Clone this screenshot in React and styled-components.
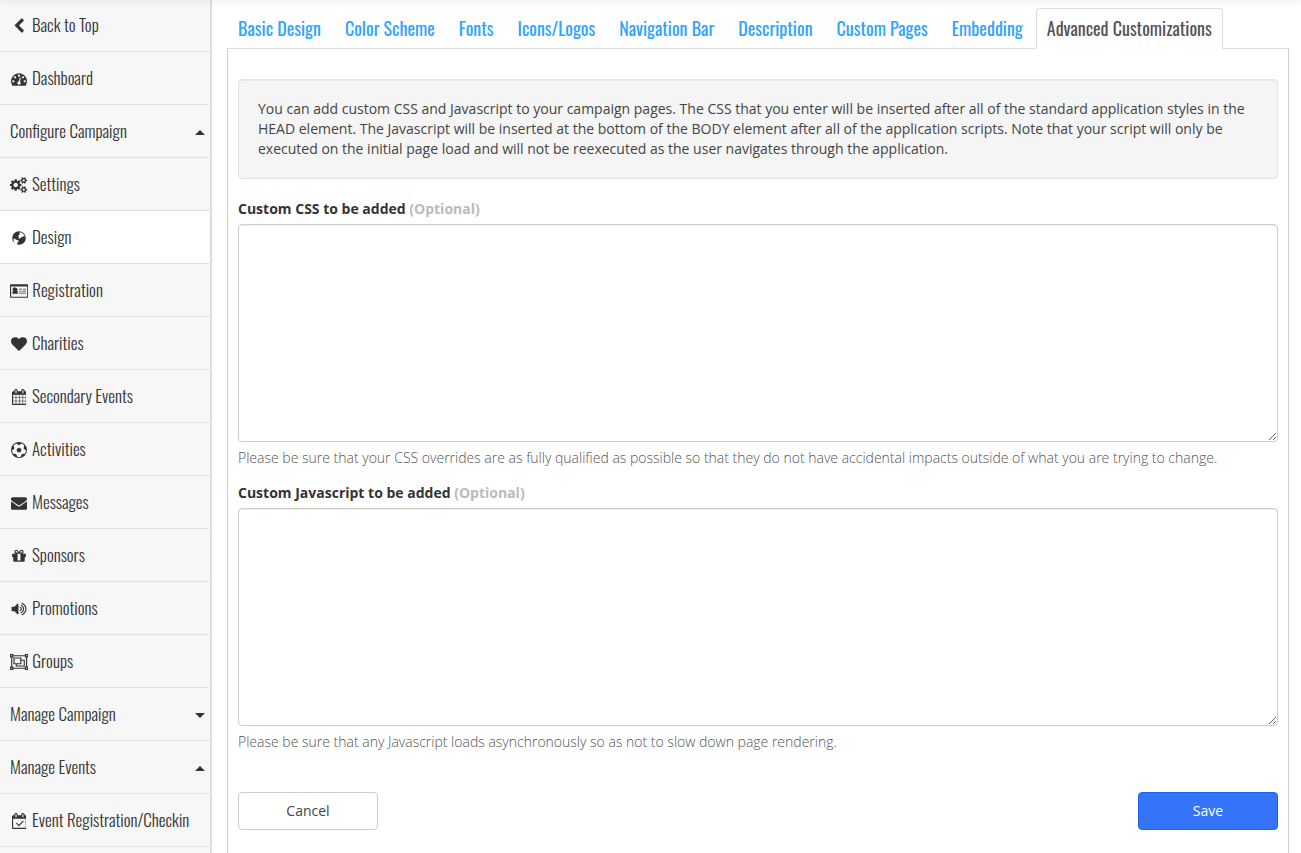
import React from "react";
import styled, { createGlobalStyle } from "styled-components";

const condensed = '"Oswald", "Liberation Sans Narrow", "Roboto Condensed", "Open Sans Condensed", "Liberation Sans", sans-serif';

const GlobalStyle = createGlobalStyle`
  *, *::before, *::after { box-sizing: border-box; }
  body {
    margin: 0;
    background: #fff;
    color: #333;
    font: 14px/20px "Open Sans", sans-serif;
  }
`;

const HeaderShadow = styled.div`
  position: fixed;
  top: 0;
  left: 0;
  right: 0;
  height: 0;
  z-index: 2;
  box-shadow: 0 0 6px 1px rgba(0, 0, 0, 0.15);
`;

const Page = styled.div`
  display: flex;
  min-height: 100vh;
`;

const Sidebar = styled.nav`
  flex: 0 0 212px;
  padding-right: 1px;
  background: #f7f7f7;
  border-right: 2px solid #dcdcdc;
`;

const MenuList = styled.ul`
  list-style: none;
  margin: -1px 0 0;
  padding: 0;
`;

const MenuItem = styled.a`
  display: flex;
  align-items: center;
  gap: 4px;
  height: 53px;
  padding: 0 4px 0 10px;
  border-bottom: 1px solid #dedede;
  background: ${(p) => (p.$active ? "#fff" : "transparent")};
  color: #333;
  font: 300 17px/24px ${condensed};
  text-decoration: none;
  white-space: nowrap;
`;

const IconBox = styled.span`
  display: flex;
  justify-content: center;
  flex: 0 0 18px;
  padding-top: 2px;

  svg {
    flex: none;
    height: 16px;
    fill: #333;
  }
`;

const Caret = styled.span`
  margin: 2px 0 0 auto;
  border: 5px solid transparent;
  border-top: ${(p) => (p.$up ? "0" : "5px solid #333")};
  border-bottom: ${(p) => (p.$up ? "5px solid #333" : "0")};
`;

const Main = styled.main`
  display: flex;
  flex-direction: column;
  flex: 1;
  min-width: 0;
  padding: 8px 12px 0 15px;
`;

const Tabs = styled.nav`
  display: flex;
  gap: 2px;
  border-bottom: 1px solid #ddd;
`;

const Tab = styled.a`
  height: 41px;
  margin-bottom: -1px;
  padding: 7px 10px;
  border: 1px solid ${(p) => (p.$active ? "#ddd" : "transparent")};
  border-bottom-color: ${(p) => (p.$active ? "#fff" : "transparent")};
  border-radius: 4px 4px 0 0;
  background: ${(p) => (p.$active ? "#fff" : "transparent")};
  color: ${(p) => (p.$active ? "#555" : "#2fa4ff")};
  font: 400 18px/24px ${condensed};
  text-decoration: none;
  white-space: nowrap;
`;

const Panel = styled.form`
  flex: 1;
  padding: 30px 10px 23px;
  border: solid #ccc;
  border-width: 0 1px;
`;

const Well = styled.p`
  margin: 0 0 20px;
  padding: 19px;
  border: 1px solid #e3e3e3;
  border-radius: 4px;
  background: #f5f5f5;
  box-shadow: inset 0 1px 1px rgba(0, 0, 0, 0.05);
  color: #444;
`;

const Field = styled.div`
  margin-bottom: 15px;
`;

const Label = styled.label`
  display: block;
  margin-bottom: 5px;
  font-weight: 700;
`;

const Optional = styled.span`
  color: #bbb;
`;

const CodeArea = styled.textarea`
  display: block;
  width: 100%;
  height: 218px;
  margin-bottom: 6px;
  padding: 6px 12px;
  border: 1px solid #ccc;
  border-radius: 4px;
  background: #fff;
  box-shadow: inset 0 1px 1px rgba(0, 0, 0, 0.075);
  color: #555;
  font: inherit;
  resize: vertical;
`;

const Help = styled.p`
  margin: 0;
  font-weight: 300;
  color: #555;
`;

const Actions = styled.div`
  display: flex;
  justify-content: space-between;
  padding-top: 25px;
`;

const Button = styled.button`
  width: 140px;
  height: 38px;
  border: 1px solid ${(p) => (p.$primary ? "#1a62f5" : "#ccc")};
  border-radius: 4px;
  background: ${(p) => (p.$primary ? "#3374f9" : "#fff")};
  color: ${(p) => (p.$primary ? "#fff" : "#444")};
  font: inherit;
  cursor: pointer;
`;

const cogTeeth =
  "v140q0 16-149 31-12 27-30 52 51 113 51 138 0 4-4 7-122 71-124 71-8 0-46-47t-52-68q-20 2-30 2t-30-2q-14 21-52 68t-46 47q-2 0-124-71-4-3-4-7 0-25 51-138-18-25-30-52-149-15-149-31v-140q0-16 149-31 13-29 30-52-51-113-51-138 0-4 4-7 4-2 35-20t59-34 30-16q8 0 46 46.5t52 67.500q20-2 30-2t30 2q51-71 92-112l6-2q4 0 124 70 4 3 4 7 0 25-51 138 17 23 30 52 149 15 149 31z";
const calendarFrame =
  "M1664 384v1280q0 52-38 90t-90 38h-1408q-52 0-90-38t-38-90v-1280q0-52 38-90t90-38h128v-96q0-66 47-113t113-47h64q66 0 113 47t47 113v96h384v-96q0-66 47-113t113-47h64q66 0 113 47t47 113v96h128q52 0 90 38t38 90z";
const calendarRings = "M384 128h128v352h-128z M1152 128h128v352h-128z";

const icons = {
  back: {
    w: 1792,
    d: "M1427 301l-531 531 531 531q19 19 19 45t-19 45l-166 166q-19 19-45 19t-45-19l-742-742q-19-19-19-45t19-45l742-742q19-19 45-19t45 19l166 166q19 19 19 45t-19 45z",
  },
  dashboard: {
    w: 1792,
    d: "M384 1152q0-53-37.500-90.500t-90.500-37.500-90.500 37.500-37.500 90.500 37.500 90.500 90.500 37.500 90.500-37.500 37.500-90.500zm192-448q0-53-37.500-90.500t-90.500-37.500-90.500 37.500-37.500 90.500 37.500 90.500 90.500 37.500 90.500-37.500 37.500-90.500zm428 481l101-382q6-26-7.500-48.500t-38.500-29.500-48 6.500-30 39.500l-101 382q-60 5-107 43.500t-63 98.500q-20 77 20 146t117 89 146-20 89-117q16-60-6-117t-72-91zm660-33q0-53-37.500-90.500t-90.500-37.500-90.500 37.500-37.500 90.500 37.500 90.500 90.500 37.500 90.500-37.500 37.500-90.500zm-640-640q0-53-37.500-90.500t-90.500-37.500-90.500 37.500-37.500 90.500 37.500 90.500 90.500 37.500 90.500-37.500 37.500-90.500zm448 192q0-53-37.500-90.500t-90.500-37.500-90.500 37.500-37.500 90.500 37.500 90.500 90.500 37.500 90.500-37.500 37.500-90.500zm320 448q0 261-141 483-19 29-54 29h-1402q-35 0-54-29-141-221-141-483 0-182 71-348t191-286 286-191 348-71 348 71 286 191 191 286 71 348z",
  },
  settings: {
    w: 1920,
    d: "M896 896q0-106-75-181t-181-75-181 75-75 181 75 181 181 75 181-75 75-181zm768 512q0-52-38-90t-90-38-90 38-38 90q0 53 37.500 90.500t90.500 37.500 90.500-37.500 37.500-90.500zm0-1024q0-52-38-90t-90-38-90 38-38 90q0 53 37.500 90.500t90.500 37.500 90.500-37.500 37.500-90.500zm-384 421v185q0 10-7 19.500t-16 10.500l-155 24q-11 35-32 76 34 48 90 115 7 11 7 20 0 12-7 19-23 30-82.500 89.500t-78.500 59.500q-11 0-21-7l-115-90q-37 19-77 31-11 108-23 155-7 24-30 24h-186q-11 0-20-7.500t-10-17.500l-23-153q-34-10-75-31l-118 89q-7 7-20 7-11 0-21-8-144-133-144-160 0-9 7-19 10-14 41-53t47-61q-23-44-35-82l-152-24q-10-1-17-9.500t-7-19.500v-185q0-10 7-19.500t16-10.500l155-24q11-35 32-76-34-48-90-115-7-11-7-20 0-12 7-20 22-30 82-89t79-59q11 0 21 7l115 90q34-18 77-32 11-108 23-154 7-24 30-24h186q11 0 20 7.500t10 17.500l23 153q34 10 75 31l118-89q8-7 20-7 11 0 21 8 144 133 144 160 0 8-7 19-12 16-42 54t-45 60q23 48 34 82l152 23q10 2 17 10.500t7 19.500z M1920 1338" + cogTeeth + "M1920 314" + cogTeeth,
  },
  design: {
    w: 1792,
    d: "M896 128a768 768 0 1 0 0 1536a768 768 0 1 0 0-1536z M960 270l180 10 220 130 130 190 30 150-130-40-120 60-140 30-80 110-150 50-80-70 100-110-110-90 60-120 130-70-60-110z M300 950l140 30 120 110 170 40 130 110-60 130-90 70-20 170-150-50-150-130-90-180-20-150z",
  },
  registration: {
    w: 2048,
    d: "M128 128h1792q128 0 128 128v1280q0 128-128 128h-1792q-128 0-128-128v-1280q0-128 128-128z M128 384v1152h1792v-1152z M640 544a190 190 0 0 1 150 310q106 80 106 266q0 96-96 96h-448q-96 0-96-96q0-186 106-266a190 190 0 0 1 278-310z M1024 640h352v96h-352z M1472 640h320v96h-320z M1024 864h256v96h-256z M1376 864h416v96h-416z M1024 1088h768v96h-768z",
  },
  charities: {
    w: 1792,
    d: "M896 1664q-26 0-44-18l-624-602q-10-8-27.500-26t-55.500-65.500-68-97.500-53.500-121-23.500-138q0-220 127-344t351-124q62 0 126.500 21.500t120 58 95.500 68.500 76 68q36-36 76-68t95.500-68.500 120-58 126.500-21.500q224 0 351 124t127 344q0 221-229 450l-623 600q-18 18-44 18z",
  },
  events: {
    w: 1664,
    d: calendarFrame + calendarRings + "M128 640h288v288h-288z M480 640h320v288h-320z M864 640h320v288h-320z M1248 640h288v288h-288z M128 992h288v320h-288z M480 992h320v320h-320z M864 992h320v320h-320z M1248 992h288v320h-288z M128 1376h288v288h-288z M480 1376h320v288h-320z M864 1376h320v288h-320z M1248 1376h288v288h-288z",
  },
  activities: {
    w: 1792,
    d: "M896 0a896 896 0 1 0 0 1792a896 896 0 1 0 0-1792z M604 173L896 356L1188 173A780 780 0 0 1 1493 395L1410 729L1674 950A780 780 0 0 1 1557 1309L1213 1333L1085 1653A780 780 0 0 1 707 1653L579 1333L235 1309A780 780 0 0 1 118 950L382 729L299 395A780 780 0 0 1 604 173z M896 608l287 208-109 336h-355l-110-336z",
  },
  messages: {
    w: 1792,
    d: "M1792 710v794q0 66-47 113t-113 47h-1472q-66 0-113-47t-47-113v-794q44 49 101 87 362 246 497 345 57 42 92.500 65.500t94.500 48 110 24.500h2q51 0 110-24.500t94.500-48 92.500-65.500q170-123 498-345 57-39 100-87zm0-294q0 79-49 151t-122 123q-376 261-468 325-10 7-42.500 30.500t-54 38-52 32.500-57.500 27-50 9h-2q-23 0-50-9t-57.500-27-52-32.500-54-38-42.500-30.500q-91-64-262-182.500t-205-142.500q-62-42-117-115.500t-55-136.500q0-78 41.500-130t118.500-52h1472q65 0 112.500 47t47.500 113z",
  },
  sponsors: {
    w: 1792,
    d: "M1056 1356v-716h-320v716q0 25 18 38.500t46 13.500h192q28 0 46-13.500t18-38.500zm-456-844h195l-126-161q-26-31-69-31-40 0-68 28t-28 68 28 68 68 28zm688-96q0-40-28-68t-68-28q-43 0-69 31l-125 161h194q40 0 68-28t28-68zm376 256v320q0 14-9 23t-23 9h-96v416q0 40-28 68t-68 28h-1088q-40 0-68-28t-28-68v-416h-96q-14 0-23-9t-9-23v-320q0-14 9-23t23-9h440q-93 0-158.500-65.500t-65.500-158.500 65.500-158.500 158.500-65.500q107 0 168 77l128 165 128-165q61-77 168-77 93 0 158.500 65.500t65.500 158.500-65.500 158.500-158.500 65.500h440q14 0 23 9t9 23z",
  },
  promotions: {
    w: 1792,
    d: "M832 352v1088q0 26-19 45t-45 19-45-19l-333-333h-262q-26 0-45-19t-19-45v-384q0-26 19-45t45-19h262l333-333q19-19 45-19t45 19 19 45zm384 544q0 76-42.500 141.500t-112.500 93.500q-10 5-25 5-26 0-45-18.500t-19-45.500q0-21 12-35.500t29-25 34-23 29-36 12-56.500-12-56.500-29-36-34-23-29-25-12-35.500q0-27 19-45.500t45-18.500q15 0 25 5 70 27 112.500 93t42.500 142zm256 0q0 153-85 282.500t-225 188.500q-13 5-25 5-27 0-46-19t-19-45q0-39 39-59 56-29 76-44 74-54 115.500-135.500t41.500-173.500-41.500-173.500-115.500-135.500q-20-15-76-44-39-20-39-59 0-26 19-45t45-19q13 0 26 5 140 59 225 188.500t85 282.500zm256 0q0 230-127 422.500t-338 283.500q-13 5-26 5-26 0-45-19t-19-45q0-36 39-59 7-4 22.500-10.500t22.500-10.500q46-25 82-51 123-91 192-227t69-289-69-289-192-227q-36-26-82-51-7-4-22.500-10.500t-22.500-10.500q-39-23-39-59 0-26 19-45t45-19q13 0 26 5 211 91 338 283.500t127 422.500z",
  },
  groups: {
    w: 2048,
    d: "M0 0h384v128h1280v-128h384v384h-128v1024h128v384h-384v-128h-1280v128h-384v-384h128v-1024h-128z M128 128v128h128v-128z M1792 128v128h128v-128z M128 1536v128h128v-128z M1792 1536v128h128v-128z M384 256v128h-128v1024h128v128h1280v-128h128v-1024h-128v-128z M384 384h896v256h384v768h-1024v-256h-256z M512 512v512h640v-512z M1280 768v384h-512v128h768v-512z",
  },
  checkin: {
    w: 1664,
    d: calendarFrame + calendarRings + "M128 640v1024h1408v-1024z M1303 964l-512 512q-10 9-23 9t-23-9l-288-288q-9-10-9-23t9-22l46-46q9-9 22-9t23 9l220 220 444-444q10-9 23-9t22 9l46 46q9 9 9 22t-9 23z",
  },
};

function Icon({ name }) {
  const { w, d } = icons[name];
  return (
    <IconBox>
      <svg viewBox={`0 0 ${w} 1792`} aria-hidden="true">
        <path fillRule="evenodd" d={d} />
      </svg>
    </IconBox>
  );
}

const menu = [
  { text: "Back to Top", icon: "back" },
  { text: "Dashboard", icon: "dashboard" },
  { text: "Configure Campaign", caret: "up" },
  { text: "Settings", icon: "settings" },
  { text: "Design", icon: "design", active: true },
  { text: "Registration", icon: "registration" },
  { text: "Charities", icon: "charities" },
  { text: "Secondary Events", icon: "events" },
  { text: "Activities", icon: "activities" },
  { text: "Messages", icon: "messages" },
  { text: "Sponsors", icon: "sponsors" },
  { text: "Promotions", icon: "promotions" },
  { text: "Groups", icon: "groups" },
  { text: "Manage Campaign", caret: "down" },
  { text: "Manage Events", caret: "up" },
  { text: "Event Registration/Checkin", icon: "checkin" },
];

const tabs = [
  "Basic Design",
  "Color Scheme",
  "Fonts",
  "Icons/Logos",
  "Navigation Bar",
  "Description",
  "Custom Pages",
  "Embedding",
  "Advanced Customizations",
];

function CodeField({ id, label, help }) {
  return (
    <Field>
      <Label htmlFor={id}>
        {label} <Optional>(Optional)</Optional>
      </Label>
      <CodeArea id={id} aria-describedby={`${id}-help`} />
      <Help id={`${id}-help`}>{help}</Help>
    </Field>
  );
}

export default function App() {
  return (
    <>
      <GlobalStyle />
      <HeaderShadow />
      <Page>
        <Sidebar>
          <MenuList>
            {menu.map(({ text, icon, caret, active }) => (
              <li key={text}>
                <MenuItem href="#" $active={active}>
                  {icon && <Icon name={icon} />}
                  {text}
                  {caret && <Caret $up={caret === "up"} />}
                </MenuItem>
              </li>
            ))}
          </MenuList>
        </Sidebar>
        <Main>
          <Tabs>
            {tabs.map((text, i) => (
              <Tab key={text} href="#" $active={i === tabs.length - 1}>
                {text}
              </Tab>
            ))}
          </Tabs>
          <Panel onSubmit={(e) => e.preventDefault()}>
            <Well>
              You can add custom CSS and Javascript to your campaign pages. The CSS that you enter will be
              inserted after all of the standard application styles in the HEAD element. The Javascript will
              be inserted at the bottom of the BODY element after all of the application scripts. Note that
              your script will only be executed on the initial page load and will not be reexecuted as the
              user navigates through the application.
            </Well>
            <CodeField
              id="custom-css"
              label="Custom CSS to be added"
              help="Please be sure that your CSS overrides are as fully qualified as possible so that they do not have accidental impacts outside of what you are trying to change."
            />
            <CodeField
              id="custom-js"
              label="Custom Javascript to be added"
              help="Please be sure that any Javascript loads asynchronously so as not to slow down page rendering."
            />
            <Actions>
              <Button type="button">Cancel</Button>
              <Button type="submit" $primary>
                Save
              </Button>
            </Actions>
          </Panel>
        </Main>
      </Page>
    </>
  );
}
